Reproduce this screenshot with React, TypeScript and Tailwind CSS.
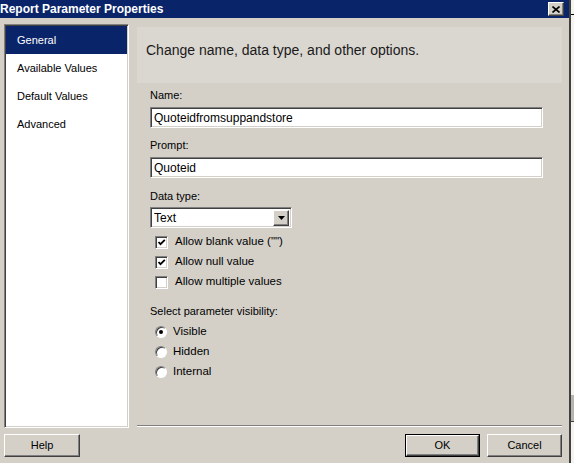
import React from 'react';

const raised =
  'border border-t-white border-l-white border-b-[#404040] border-r-[#404040] shadow-[inset_-1px_-1px_0_#808080]';
const sunken =
  'border border-t-[#808080] border-l-[#808080] border-b-white border-r-white shadow-[inset_1px_1px_0_#404040,inset_-1px_-1px_0_#d4d0c8]';

function TextField({ value }: { value: string }) {
  return (
    <div className={`h-[21px] w-[393px] bg-white ${sunken} flex items-center pl-[3px] text-[12px] text-black`}>
      {value}
    </div>
  );
}

function CheckBox({ checked, label }: { checked: boolean; label: string }) {
  return (
    <div className="h-[20px] flex items-center pl-[5px]">
      <div className={`w-[13px] h-[13px] bg-white ${sunken} flex items-center justify-center`}>
        {checked && (
          <svg width="9" height="9" viewBox="0 0 9 9">
            <polyline points="1.5,4 3.5,6.2 7.8,1.8" fill="none" stroke="#000" strokeWidth="1.8" />
          </svg>
        )}
      </div>
      <span className="ml-[7px] text-[11.5px]">{label}</span>
    </div>
  );
}

function Radio({ selected, label }: { selected: boolean; label: string }) {
  return (
    <div className="h-[20px] flex items-center pl-[5px]">
      <div className="w-[12px] h-[12px] rounded-full bg-white border border-t-[#808080] border-l-[#808080] border-b-white border-r-white shadow-[inset_1px_1px_0_#404040] flex items-center justify-center">
        {selected && <div className="w-[4px] h-[4px] rounded-full bg-black" />}
      </div>
      <span className="ml-[6px] text-[11.5px]">{label}</span>
    </div>
  );
}

function Button({ label, isDefault }: { label: string; isDefault?: boolean }) {
  return (
    <div className={isDefault ? 'border border-black' : ''}>
      <div
        className={`${isDefault ? 'w-[73px] h-[21px]' : 'w-[75px] h-[23px]'} ${raised} bg-[#d4d0c8] flex items-center justify-center text-[11px]`}
      >
        {label}
      </div>
    </div>
  );
}

const pages = ['General', 'Available Values', 'Default Values', 'Advanced'];

export default function App() {
  return (
    <div
      className="w-[574px] h-[463px] flex bg-[#d4d0c8] text-black overflow-hidden"
      style={{ fontFamily: '"Liberation Sans", Arial, sans-serif' }}
    >
      <div className="w-[569px] flex flex-col">
        {/* caption bar */}
        <div className="h-[18px] bg-[#0a246a] flex items-center justify-between pr-[5px]">
          <span className="text-white font-bold text-[12px] leading-none">Report Parameter Properties</span>
          <div className={`w-[16px] h-[14px] bg-[#d4d0c8] ${raised} flex items-center justify-center`}>
            <svg width="8" height="7" viewBox="0 0 8 7">
              <path d="M0.5 0.5 L7.5 6.5 M7.5 0.5 L0.5 6.5" stroke="#000" strokeWidth="1.6" />
            </svg>
          </div>
        </div>

        <div className="h-[410px] flex">
          {/* page list */}
          <div className={`ml-[4px] mt-[6px] w-[125px] h-[404px] bg-white ${sunken} p-[1px]`}>
            {pages.map((p, i) => (
              <div
                key={p}
                className={`h-[28px] flex items-center pl-[11px] text-[11px] ${
                  i === 0 ? 'bg-[#0a246a] text-white' : 'text-black'
                }`}
              >
                {p}
              </div>
            ))}
          </div>

          <div className="ml-[8px] w-[425px] flex flex-col">
            <div className="mt-[9px] h-[56px] bg-[#dad7d1] pl-[9px] pt-[15px] text-[14px] leading-[16px] text-[#1a1a1a]">
              Change name, data type, and other options.
            </div>

            <div className="pl-[13px] flex flex-col text-[11px]">
              <div className="mt-[5px] h-[14px] leading-[14px]">Name:</div>
              <div className="mt-[5px]">
                <TextField value="Quoteidfromsuppandstore" />
              </div>
              <div className="mt-[10px] h-[14px] leading-[14px]">Prompt:</div>
              <div className="mt-[5px]">
                <TextField value="Quoteid" />
              </div>
              <div className="mt-[11px] h-[14px] leading-[14px]">Data type:</div>
              <div className={`mt-[4px] h-[21px] w-[142px] bg-white ${sunken} flex items-center justify-between pl-[3px] pr-[2px]`}>
                <span className="text-[12px]">Text</span>
                <div className={`w-[16px] h-[16px] bg-[#d4d0c8] ${raised} flex items-center justify-center`}>
                  <svg width="7" height="4" viewBox="0 0 7 4">
                    <path d="M0 0 H7 L3.5 4 Z" fill="#000" />
                  </svg>
                </div>
              </div>
              <div className="mt-[4px] flex flex-col">
                <CheckBox checked label={'Allow blank value ("")'} />
                <CheckBox checked label="Allow null value" />
                <CheckBox checked={false} label="Allow multiple values" />
              </div>
              <div className="mt-[12px] h-[14px] leading-[14px]">Select parameter visibility:</div>
              <div className="mt-[4px] flex flex-col">
                <Radio selected label="Visible" />
                <Radio selected={false} label="Hidden" />
                <Radio selected={false} label="Internal" />
              </div>
            </div>

            <div className="mt-auto mb-[1px] w-[425px] h-[2px] border-t border-t-[#808080] border-b border-b-white" />
          </div>
        </div>

        {/* dialog buttons */}
        <div className="pt-[6px] flex pl-[4px] pr-[7px]">
          <div className={`w-[76px] h-[23px] ${raised} bg-[#d4d0c8] flex items-center justify-center text-[11px]`}>
            Help
          </div>
          <div className="ml-auto flex gap-[7px]">
            <Button label="OK" isDefault />
            <Button label="Cancel" />
          </div>
        </div>
      </div>

      {/* edge of the window behind */}
      <div className="w-[2px] bg-[#404040]" />
      <div className="w-[3px] bg-[#f4f3ee] flex flex-col">
        <div className="mt-[14px] h-[1px] bg-black" />
        <div className="mt-[380px] h-[27px] bg-[#b8b5ae] border-b border-b-[#404040]" />
      </div>
    </div>
  );
}
